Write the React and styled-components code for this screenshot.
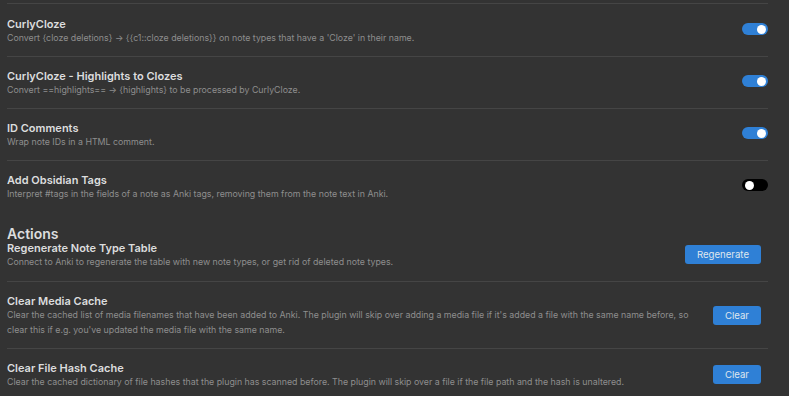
import React from "react";
import styled, { createGlobalStyle } from "styled-components";

const GlobalStyle = createGlobalStyle`
  html, body {
    margin: 0;
    padding: 0;
    background: #333333;
  }
  body {
    font-family: Inter, "Noto Sans", sans-serif;
    -webkit-font-smoothing: antialiased;
  }
`;

const Page = styled.div`
  width: 761px;
  height: 396px;
  margin-left: 7px;
  padding-top: 3px;
  overflow: hidden;
  box-sizing: border-box;
`;

const SettingItem = styled.div`
  display: flex;
  align-items: center;
  border-top: ${(p) => (p.$noBorder ? "none" : "1px solid #454545")};
  padding: ${(p) => (p.$noBorder ? "0 0 12px" : "11px 0")};
  padding-top: ${(p) => (p.$first ? "12px" : undefined)};
`;

const Info = styled.div`
  flex: 1;
  margin-right: 16px;
`;

const Name = styled.div`
  color: #dcddde;
  font-size: 11px;
  font-weight: 600;
  line-height: 14px;
  margin-top: 1px;
`;

const Desc = styled.div`
  color: #8e8e8e;
  font-size: 8.8px;
  line-height: 15px;
  margin-top: -1px;
`;

const Heading = styled.div`
  color: #dcddde;
  font-size: 14px;
  font-weight: 600;
  line-height: 13px;
  margin-top: 15px;
`;

const Toggle = styled.div`
  position: relative;
  width: 26px;
  height: 12px;
  border-radius: 6px;
  background: ${(p) => (p.$on ? "#2f80d6" : "#000")};
  margin-bottom: 3px;
  flex-shrink: 0;

  &::after {
    content: "";
    position: absolute;
    top: 1.5px;
    left: ${(p) => (p.$on ? "15px" : "3px")};
    width: 9px;
    height: 9px;
    border-radius: 50%;
    background: #fff;
  }
`;

const Button = styled.button`
  height: 19px;
  padding: 0 12px;
  margin-right: 7px;
  border: none;
  border-radius: 3px;
  background: #2f80d6;
  color: #dfe6ee;
  font-family: Inter, "Noto Sans", sans-serif;
  font-size: 9.6px;
  flex-shrink: 0;
`;

const toggles = [
  {
    name: "CurlyCloze",
    desc: "Convert {cloze deletions} \u2192 {{c1::cloze deletions}} on note types that have a 'Cloze' in their name.",
    on: true,
  },
  {
    name: "CurlyCloze - Highlights to Clozes",
    desc: "Convert ==highlights== \u2192 {highlights} to be processed by CurlyCloze.",
    on: true,
  },
  {
    name: "ID Comments",
    desc: "Wrap note IDs in a HTML comment.",
    on: true,
  },
  {
    name: "Add Obsidian Tags",
    desc: "Interpret #tags in the fields of a note as Anki tags, removing them from the note text in Anki.",
    on: false,
  },
];

const actions = [
  {
    name: "Regenerate Note Type Table",
    desc: "Connect to Anki to regenerate the table with new note types, or get rid of deleted note types.",
    label: "Regenerate",
  },
  {
    name: "Clear Media Cache",
    desc: "Clear the cached list of media filenames that have been added to Anki. The plugin will skip over adding a media file if it's added a file with the same name before, so clear this if e.g. you've updated the media file with the same name.",
    label: "Clear",
  },
  {
    name: "Clear File Hash Cache",
    desc: "Clear the cached dictionary of file hashes that the plugin has scanned before. The plugin will skip over a file if the file path and the hash is unaltered.",
    label: "Clear",
  },
];

export default function App() {
  return (
    <>
      <GlobalStyle />
      <Page>
        {toggles.map((t, i) => (
          <SettingItem key={t.name} $first={i === 0}>
            <Info>
              <Name>{t.name}</Name>
              <Desc>{t.desc}</Desc>
            </Info>
            <Toggle $on={t.on} />
          </SettingItem>
        ))}
        <Heading>Actions</Heading>
        {actions.map((a, i) => (
          <SettingItem key={a.name} $noBorder={i === 0}>
            <Info>
              <Name>{a.name}</Name>
              <Desc>{a.desc}</Desc>
            </Info>
            <Button>{a.label}</Button>
          </SettingItem>
        ))}
      </Page>
    </>
  );
}
